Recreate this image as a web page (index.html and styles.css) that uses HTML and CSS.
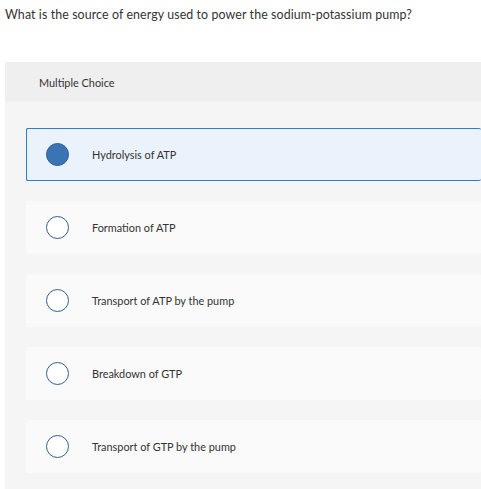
FILE: index.html
```html
<!DOCTYPE html>
<html>
<head>
<meta charset="utf-8">
<link rel="stylesheet" href="styles.css">
</head>
<body>
<p class="question">What is the source of energy used to power the sodium-potassium pump?</p>
<div class="panel">
  <div class="panel-header">Multiple Choice</div>
  <div class="options">
    <div class="option selected"><span class="radio"></span><span class="label">Hydrolysis of ATP</span></div>
    <div class="option"><span class="radio"></span><span class="label">Formation of ATP</span></div>
    <div class="option"><span class="radio"></span><span class="label">Transport of ATP by the pump</span></div>
    <div class="option"><span class="radio"></span><span class="label">Breakdown of GTP</span></div>
    <div class="option"><span class="radio"></span><span class="label">Transport of GTP by the pump</span></div>
  </div>
</div>
</body>
</html>
```
FILE: styles.css
```css
html, body {
  margin: 0;
  padding: 0;
  background: #ffffff;
  font-family: "Lato", "Liberation Sans", sans-serif;
  color: #333333;
  overflow: hidden;
}
.question {
  margin: 0;
  padding: 7px 0 0 5px;
  font-size: 12.4px;
  letter-spacing: 0.1px;
  line-height: 15px;
  height: 55px;
  color: #333;
}
.panel {
  margin-left: 5px;
  background: #f5f5f5;
  height: 440px;
}
.panel-header {
  height: 40px;
  display: flex;
  align-items: center;
  padding-left: 34px;
  background: #efefef;
  font-size: 10.9px;
  color: #333;
}
.options {
  display: flex;
  flex-direction: column;
  gap: 20px;
  padding: 26px 0 0 21px;
}
.option {
  height: 53px;
  box-sizing: border-box;
  display: flex;
  align-items: center;
  background: #fafafa;
  border: 1px solid transparent;
  border-radius: 2px;
  padding-left: 19px;
}
.option.selected {
  background: #eaf2fc;
  border-color: #2f7bd0;
  border-right: none;
}
.radio {
  width: 23px;
  height: 23px;
  box-sizing: border-box;
  border-radius: 50%;
  border: 1.5px solid #2f5f90;
  background: #ffffff;
  flex: none;
}
.selected .radio {
  background: #3b74b4;
  border-color: #2d5f98;
}
.label {
  margin-left: 23px;
  font-size: 10.9px;
  color: #333;
}
```
